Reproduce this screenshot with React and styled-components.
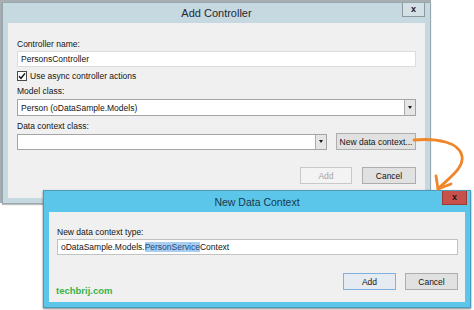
import React from 'react';
import styled, { createGlobalStyle } from 'styled-components';

const GlobalStyle = createGlobalStyle`
    html, body {
        margin: 0;
        padding: 0;
        background: #ffffff;
    }

    body {
        font-family: "Liberation Sans", Arial, sans-serif;
        font-size: 8.5px;
        color: #141414;
    }

    * {
        box-sizing: border-box;
    }
`;

const Desktop = styled.div`
    position: relative;
    width: 474px;
    height: 310px;
    overflow: hidden;
    background: #ffffff;
`;

const Backdrop = styled.div`
    position: absolute;
    left: 0;
    top: 0;
    width: 431px;
    height: 203px;
    background: #a7afb3;
`;

const Window = styled.div`
    position: absolute;
    left: ${({ $x }) => $x}px;
    top: ${({ $y }) => $y}px;
    width: ${({ $w }) => $w}px;
    display: flex;
    flex-direction: column;
    padding: 0 5px 5px 5px;
    background: ${({ $active }) => ($active ? '#5cc6ea' : '#c6d8e0')};
    border: 1px solid ${({ $active }) => ($active ? '#4a9bbb' : '#98a7ae')};
    box-shadow: ${({ $active }) => ($active ? '0 1px 2px rgba(0, 0, 0, 0.5)' : '0 1px 1px rgba(0, 0, 0, 0.25)')};
`;

const TitleBar = styled.div`
    display: grid;
    grid-template-columns: 1fr auto 1fr;
    align-items: center;
    height: ${({ $h }) => $h}px;
`;

const Title = styled.div`
    grid-column: 2;
    font-size: ${({ $size }) => $size}px;
    color: ${({ $active }) => ($active ? '#18384d' : '#1e2a30')};
    white-space: nowrap;
`;

const CloseButton = styled.div`
    grid-column: 3;
    justify-self: end;
    align-self: start;
    display: flex;
    align-items: center;
    justify-content: center;
    width: ${({ $w }) => $w}px;
    height: 14px;
    margin-right: ${({ $active }) => ($active ? '-2px' : '0')};
    background: ${({ $active }) => ($active ? '#c9514c' : '#d3e1e7')};
    border: 1px solid ${({ $active }) => ($active ? '#9c3a36' : '#8b989e')};
    border-top: none;
    font-size: 9px;
    font-weight: bold;
    line-height: 1;
    color: #1a1a1a;
`;

const Body = styled.div`
    position: relative;
    display: flex;
    flex-direction: column;
    height: ${({ $h }) => $h}px;
    padding: ${({ $pad }) => $pad};
    background: #f0f0f0;
`;

const FieldLabel = styled.div`
    height: 12px;
    line-height: 12px;
    margin-top: ${({ $mt }) => $mt || 0}px;
    white-space: nowrap;
`;

const TextBox = styled.div`
    display: flex;
    align-items: center;
    height: 16px;
    margin-top: ${({ $mt }) => $mt || 0}px;
    padding: 0 3px;
    background: #ffffff;
    border: 1px solid ${({ $soft }) => ($soft ? '#dcdcdc' : '#c2c2c2')};
    white-space: nowrap;
`;

const Selected = styled.span`
    background: #a9cdf1;
    color: #234a7c;
`;

const CheckRow = styled.label`
    display: flex;
    align-items: center;
    gap: 3px;
    height: 11px;
    margin-top: 3px;
`;

const CheckBox = styled.span`
    display: flex;
    align-items: center;
    justify-content: center;
    width: 10px;
    height: 10px;
    background: #ffffff;
    border: 1px solid #4a4a4a;
`;

const Row = styled.div`
    display: flex;
    align-items: center;
    gap: 9px;
    margin-top: ${({ $mt }) => $mt || 0}px;
`;

const Combo = styled.div`
    flex: ${({ $grow }) => ($grow ? 1 : 'none')};
    display: flex;
    height: ${({ $h }) => $h}px;
    margin-top: ${({ $mt }) => $mt || 0}px;
    background: #ffffff;
    border: 1px solid #a4a4a4;
`;

const ComboText = styled.div`
    flex: 1;
    display: flex;
    align-items: center;
    padding: 0 3px;
    white-space: nowrap;
`;

const DropButton = styled.div`
    display: flex;
    align-items: center;
    justify-content: center;
    width: 11px;
    background: #e5e5e5;
    border-left: 1px solid #acacac;

    &::after {
        content: '';
        border-left: 2.5px solid transparent;
        border-right: 2.5px solid transparent;
        border-top: 3px solid #1a1a1a;
    }
`;

const ButtonRow = styled.div`
    display: flex;
    justify-content: flex-end;
    gap: ${({ $gap }) => $gap}px;
    margin-top: ${({ $mt }) => $mt}px;
`;

const Button = styled.div`
    display: flex;
    align-items: center;
    justify-content: center;
    width: ${({ $w }) => $w}px;
    height: 17px;
    background: ${({ $disabled, $default }) => ($disabled ? '#f3f3f3' : $default ? '#e5ebf1' : '#e1e1e1')};
    border: 1px solid ${({ $disabled, $default }) => ($disabled ? '#c9c9c9' : $default ? '#7fb1e3' : '#adadad')};
    color: ${({ $disabled }) => ($disabled ? '#a6a6a6' : '#141414')};
    white-space: nowrap;
`;

const Watermark = styled.div`
    position: absolute;
    left: 7px;
    top: 73px;
    line-height: 12px;
    font-size: 9.5px;
    font-weight: bold;
    color: #38b34a;
`;

const Arrow = styled.svg`
    position: absolute;
    left: 0;
    top: 0;
    pointer-events: none;
`;

const AddController = () => (
    <Window $x={2} $y={2} $w={429}>
        <TitleBar $h={20}>
            <Title $size={11}>Add Controller</Title>
            <CloseButton $w={23}>x</CloseButton>
        </TitleBar>
        <Body $h={175} $pad="15px 9px 0 9px">
            <FieldLabel>Controller name:</FieldLabel>
            <TextBox $mt={1} $soft>PersonsController</TextBox>
            <CheckRow>
                <CheckBox>
                    <svg width="8" height="8" viewBox="0 0 8 8">
                        <polyline points="1,4.2 3,6.3 7,1.4" fill="none" stroke="#1a1a1a" strokeWidth="1.5" />
                    </svg>
                </CheckBox>
                Use async controller actions
            </CheckRow>
            <FieldLabel $mt={4}>Model class:</FieldLabel>
            <Combo $h={17} $mt={2}>
                <ComboText>Person (oDataSample.Models)</ComboText>
                <DropButton />
            </Combo>
            <FieldLabel $mt={4}>Data context class:</FieldLabel>
            <Row $mt={1}>
                <Combo $h={16} $grow>
                    <ComboText />
                    <DropButton />
                </Combo>
                <Button $w={80}>New data context...</Button>
            </Row>
            <ButtonRow $gap={10} $mt={17}>
                <Button $w={52} $disabled>Add</Button>
                <Button $w={54}>Cancel</Button>
            </ButtonRow>
        </Body>
    </Window>
);

const NewDataContext = () => (
    <Window $x={43} $y={190} $w={428} $active>
        <TitleBar $h={21}>
            <Title $size={10.5} $active>New Data Context</Title>
            <CloseButton $w={25} $active>x</CloseButton>
        </TitleBar>
        <Body $h={90} $pad="14px 7px 0 8px">
            <FieldLabel>New data context type:</FieldLabel>
            <TextBox $mt={1}>
                oDataSample.Models.<Selected>PersonService</Selected>Context
            </TextBox>
            <ButtonRow $gap={9} $mt={18}>
                <Button $w={53} $default>Add</Button>
                <Button $w={53}>Cancel</Button>
            </ButtonRow>
            <Watermark>techbrij.com</Watermark>
        </Body>
    </Window>
);

const App = () => (
    <Desktop>
        <GlobalStyle />
        <Backdrop />
        <AddController />
        <NewDataContext />
        <Arrow width="474" height="310" viewBox="0 0 474 310">
            <path
                d="M 414 140 C 437 138, 459 142, 462 156 C 464 168, 450 177, 438 189"
                fill="none"
                stroke="#f0862a"
                strokeWidth="2.8"
                strokeLinecap="round"
            />
            <path
                d="M 436 176 L 438 189 L 451 184"
                fill="none"
                stroke="#f0862a"
                strokeWidth="2.8"
                strokeLinecap="round"
                strokeLinejoin="round"
            />
        </Arrow>
    </Desktop>
);

export default App;
